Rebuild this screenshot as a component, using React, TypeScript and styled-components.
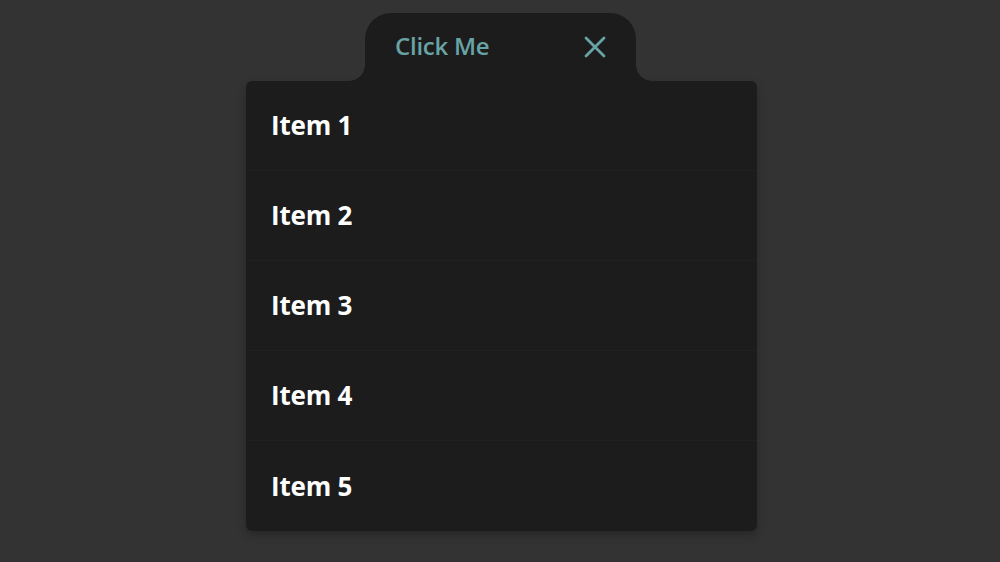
import React from "react";
import styled, { createGlobalStyle } from "styled-components";

const Global = createGlobalStyle`
  html, body { margin: 0; padding: 0; background: #333333; }
  body { font-family: "Open Sans", "Noto Sans", sans-serif; }
`;

const Page = styled.div`
  width: 1000px;
  height: 562px;
  display: flex;
  flex-direction: column;
  align-items: center;
  padding-top: 13px;
  box-sizing: border-box;
`;

const Menu = styled.div`
  display: flex;
  flex-direction: column;
  align-items: center;
  width: 511px;
  margin-left: 3px;
`;

const Tab = styled.button`
  position: relative;
  width: 271px;
  height: 68px;
  margin-left: -2px;
  box-sizing: border-box;
  padding: 0 30px 0 30px;
  display: flex;
  align-items: center;
  justify-content: space-between;
  background: #1c1c1c;
  border: none;
  border-radius: 26px 26px 0 0;
  color: #68a3a5;
  font-family: "Open Sans", sans-serif;
  font-weight: 600;
  font-size: 24px;
  cursor: pointer;
  &::before, &::after {
    content: "";
    position: absolute;
    bottom: 0;
    width: 16px;
    height: 16px;
  }
  &::before {
    left: -16px;
    background: radial-gradient(circle at 0 0, transparent 15.5px, #1c1c1c 16px);
  }
  &::after {
    right: -16px;
    background: radial-gradient(circle at 100% 0, transparent 15.5px, #1c1c1c 16px);
  }
`;

const Label = styled.span`
  padding-bottom: 3px;
  letter-spacing: -0.25px;
`;

const Panel = styled.ul`
  list-style: none;
  margin: 0;
  padding: 0;
  width: 511px;
  background: #1c1c1c;
  border-radius: 6px;
  box-shadow: 0 4px 10px rgba(0, 0, 0, 0.25);
  overflow: hidden;
`;

const Item = styled.li<{ $last?: boolean }>`
  height: 90px;
  display: flex;
  align-items: center;
  padding-left: 25px;
  padding-bottom: 1px;
  border-bottom: ${(p) => (p.$last ? "none" : "1px solid #202020")};
  box-sizing: border-box;
  color: #ffffff;
  font-family: "Open Sans", sans-serif;
  font-weight: 700;
  font-size: 26px;
  letter-spacing: -0.2px;
`;

const CloseIcon = () => (
  <svg width="22" height="22" viewBox="0 0 22 22" fill="none">
    <path d="M2 2 L20 20 M20 2 L2 20" stroke="#68a3a5" strokeWidth="2.8" strokeLinecap="round" />
  </svg>
);

export default function App() {
  const items = ["Item 1", "Item 2", "Item 3", "Item 4", "Item 5"];
  return (
    <>
      <Global />
      <Page>
        <Menu>
          <Tab>
            <Label>Click Me</Label>
            <CloseIcon />
          </Tab>
          <Panel>
            {items.map((t, i) => (
              <Item key={t} $last={i === items.length - 1}>
                {t}
              </Item>
            ))}
          </Panel>
        </Menu>
      </Page>
    </>
  );
}
